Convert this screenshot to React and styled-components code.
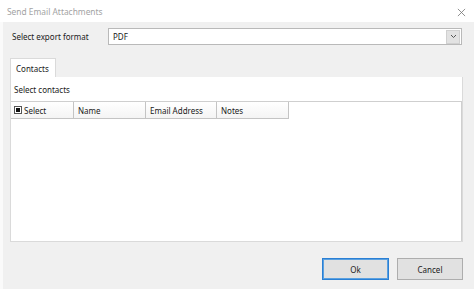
import React from "react";
import styled, { createGlobalStyle } from "styled-components";

const Global = createGlobalStyle`
  html, body {
    margin: 0;
    padding: 0;
    background: #ffffff;
  }
  body {
    font-family: "Noto Sans", "Open Sans", sans-serif;
    font-size: 8px;
    color: #1a1a1a;
  }
`;

const Window = styled.div`
  width: 474px;
  height: 289px;
  display: flex;
  flex-direction: column;
  background: #f0f0f0;
  border-left: 3px solid #fafafa;
  box-sizing: border-box;
`;

const TitleBar = styled.div`
  height: 22px;
  flex: none;
  display: flex;
  align-items: center;
  justify-content: space-between;
  padding: 0 8px 0 7px;
  background: #ffffff;
  margin-left: -3px;
  color: #a3a3a3;
  font-size: 8.4px;
`;

const Close = styled.svg`
  width: 9px;
  height: 9px;
  margin-top: 2px;
`;

const Body = styled.div`
  flex: 1;
  display: flex;
  flex-direction: column;
  padding: 6px 11px 9px 7px;
`;

const FormatRow = styled.div`
  display: flex;
  align-items: center;
  height: 17px;
`;

const Label = styled.span`
  width: 96px;
  padding-left: 2px;
  flex: none;
`;

const Select = styled.div`
  flex: 1;
  height: 17px;
  box-sizing: border-box;
  display: flex;
  align-items: center;
  justify-content: space-between;
  background: #ffffff;
  border: 1px solid #b9b9b9;
  padding: 0 1px 0 4px;
  margin-right: 1px;
`;

const ArrowBox = styled.div`
  width: 12px;
  height: 12px;
  background: #e2e2e2;
  border: 1px solid #d0d0d0;
  display: flex;
  align-items: center;
  justify-content: center;
`;

const TabStrip = styled.div`
  display: flex;
  margin-top: 13px;
`;

const Tab = styled.div`
  height: 19px;
  box-sizing: border-box;
  padding: 0 6px 0 5px;
  display: flex;
  align-items: center;
  background: #ffffff;
  border: 1px solid #dadada;
  border-bottom: none;
`;

const TabPanel = styled.div`
  background: #ffffff;
  border: 1px solid #dadada;
  border-top: none;
  display: flex;
  flex-direction: column;
  flex: 1;
`;

const Caption = styled.div`
  height: 24px;
  display: flex;
  align-items: center;
  padding-left: 3px;
`;

const Grid = styled.div`
  flex: 1;
  border-top: 1px solid #cfcfcf;
  border-right: 1px solid #cfcfcf;
  display: flex;
  flex-direction: column;
`;

const HeaderRow = styled.div`
  display: flex;
  height: 17px;
`;

const HeaderCell = styled.div`
  width: ${(p) => p.$w}px;
  box-sizing: border-box;
  display: flex;
  align-items: center;
  gap: 2px;
  padding-left: ${(p) => p.$pad ?? 4}px;
  background: linear-gradient(#ffffff, #f4f4f4);
  border-right: 1px solid #c4c4c4;
  border-bottom: 1px solid #c4c4c4;
`;

const Check = styled.span`
  width: 8px;
  height: 8px;
  box-sizing: border-box;
  border: 1px solid #555;
  background: #fff;
  display: flex;
  align-items: center;
  justify-content: center;
  &::after {
    content: "";
    width: 4px;
    height: 4px;
    background: #111;
  }
`;

const Footer = styled.div`
  display: flex;
  justify-content: flex-end;
  gap: 8px;
  margin-top: 16px;
`;

const Button = styled.button`
  width: ${(p) => p.$w}px;
  height: 22px;
  font-family: inherit;
  font-size: 8px;
  color: #1a1a1a;
  background: #e1e1e1;
  border: 1px solid ${(p) => (p.$primary ? "#2a7fd4" : "#adadad")};
  box-shadow: ${(p) => (p.$primary ? "inset 0 0 0 1px #5aa0e0" : "none")};
  padding: 0;
`;

export default function App() {
  return (
    <>
      <Global />
      <Window>
        <TitleBar>
          <span>Send Email Attachments</span>
          <Close viewBox="0 0 10 10">
            <path d="M1 1 L9 9 M9 1 L1 9" stroke="#777" strokeWidth="0.9" />
          </Close>
        </TitleBar>
        <Body>
          <FormatRow>
            <Label>Select export format</Label>
            <Select>
              <span>PDF</span>
              <ArrowBox>
                <svg width="7" height="5" viewBox="0 0 7 5">
                  <path d="M1 1 L3.5 3.5 L6 1" stroke="#555" strokeWidth="1" fill="none" />
                </svg>
              </ArrowBox>
            </Select>
          </FormatRow>
          <TabStrip>
            <Tab>Contacts</Tab>
          </TabStrip>
          <TabPanel>
            <Caption>Select contacts</Caption>
            <Grid>
              <HeaderRow>
                <HeaderCell $w={63} $pad={3}>
                  <Check />
                  Select
                </HeaderCell>
                <HeaderCell $w={72}>Name</HeaderCell>
                <HeaderCell $w={71}>Email Address</HeaderCell>
                <HeaderCell $w={72}>Notes</HeaderCell>
              </HeaderRow>
            </Grid>
          </TabPanel>
          <Footer>
            <Button $w={67} $primary>Ok</Button>
            <Button $w={66}>Cancel</Button>
          </Footer>
        </Body>
      </Window>
    </>
  );
}
